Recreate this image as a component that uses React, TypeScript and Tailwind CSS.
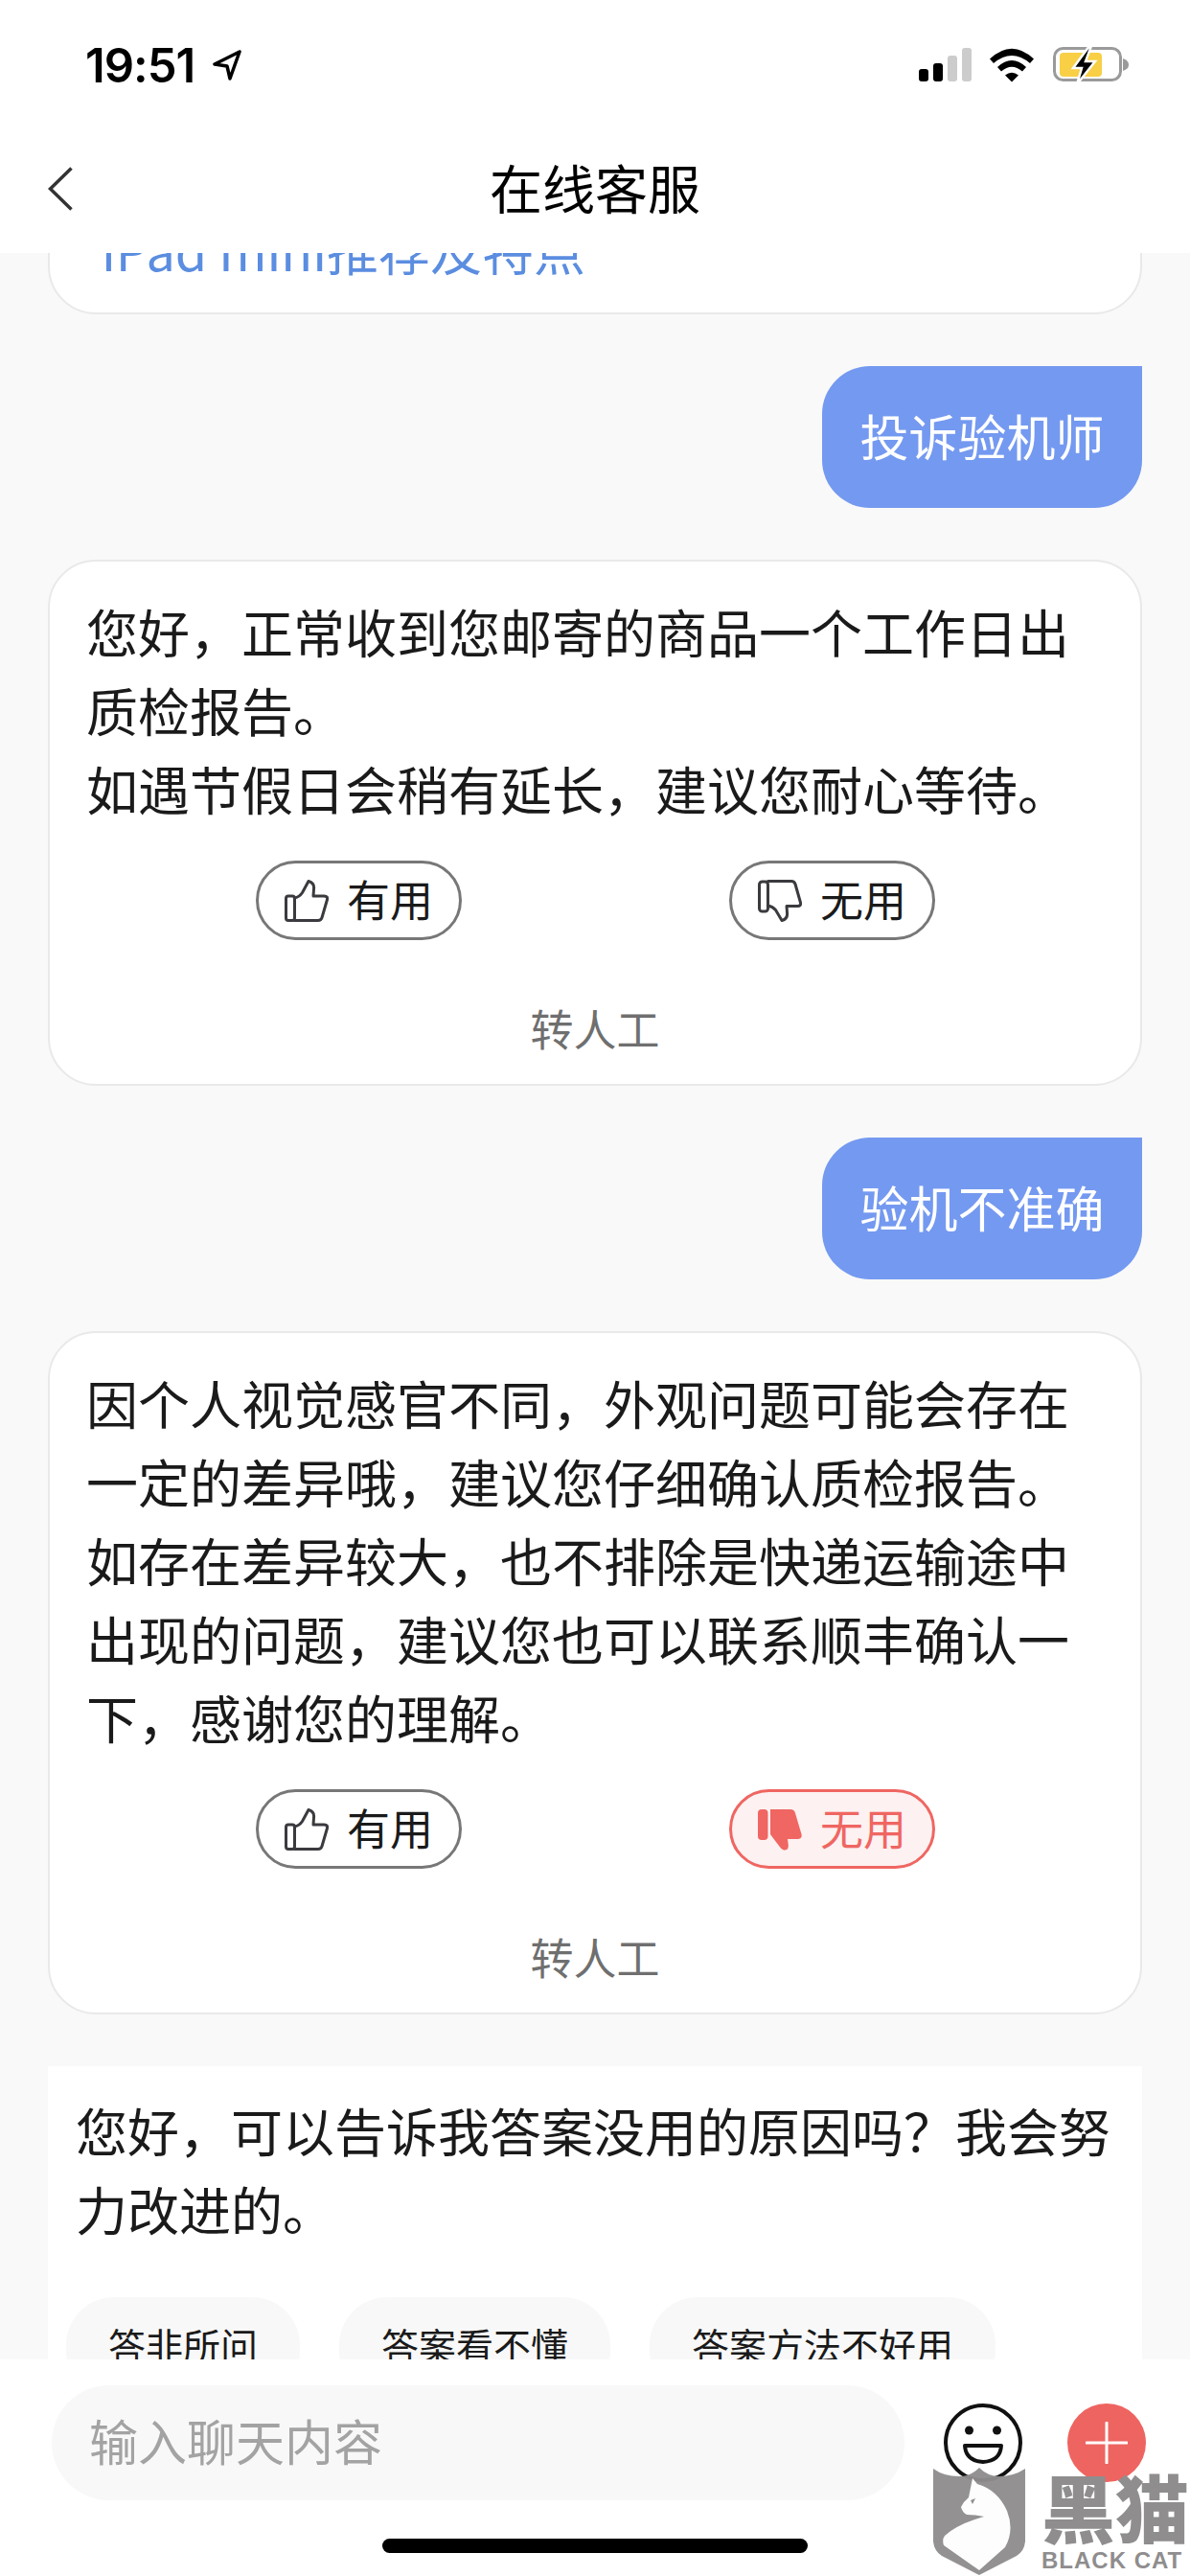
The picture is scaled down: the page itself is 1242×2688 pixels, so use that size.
import React from "react";

const FONT = "font-['Noto_Sans_CJK_SC','Noto_Sans',sans-serif]";

function ThumbUp({ className = "" }: { className?: string }) {
  return (
    <svg viewBox="0 0 46 44" className={className} fill="none" stroke="currentColor" strokeWidth="3" strokeLinejoin="round" strokeLinecap="round">
      <rect x="1.5" y="17" width="9" height="25.5" rx="2.5" />
      <path d="M10.5 42.5H35q3 0 4-3l5.4-18.5q1-4-3-4H30l.6-8.5Q30.800 3 25 1.500L18.500 13.500Q15.500 18 10.500 19" />
    </svg>
  );
}

function ThumbDown({ active = false }: { active?: boolean }) {
  if (active) {
    return (
      <svg viewBox="0 0 46 44" className="h-[44px] w-[46px] text-[#ef6662]" fill="currentColor">
        <rect x="0" y="1" width="10.500" height="32" rx="4" />
        <path d="M13 1H34q4 0 5 4L45.500 27q1 5-4 5H31l.8 6.500Q32 44 27 43.500 24.500 43 22 39L14 28.500Q13 27.500 13 26Z" />
      </svg>
    );
  }
  return (
    <svg viewBox="0 0 46 44" className="h-[44px] w-[46px] -scale-y-100 text-[#3a3a3f]" fill="none" stroke="currentColor" strokeWidth="3" strokeLinejoin="round" strokeLinecap="round">
      <rect x="1.500" y="11" width="9" height="31" rx="3" />
      <path d="M10.500 42.500H35q3 0 4-3l5.400-19q1-4-3-4H30l.6-8Q30.800 3 25 1.500L18.500 12.500Q15.500 16 10.500 17" />
    </svg>
  );
}

function Pill({ label, down, active }: { label: string; down?: boolean; active?: boolean }) {
  return (
    <div
      className={`flex h-[83px] w-[215px] items-center gap-[19px] rounded-full border-[3px] pl-[27px] text-[45px] leading-none ${
        active ? "border-[#ef6662] bg-[#fdf1f1] text-[#ef6662]" : "border-[#777777] bg-white text-[#1a1a1a]"
      }`}
    >
      {down ? <ThumbDown active={active} /> : <ThumbUp className="h-[44px] w-[46px] text-[#3a3a3f]" />}
      <span className="pb-[5px]">{label}</span>
    </div>
  );
}

function Reply({ lines, active }: { lines: string[]; active?: boolean }) {
  return (
    <section className="rounded-[50px] border-2 border-[#e9e9e9] bg-white pt-[32px]">
      <div className="px-[38px] text-[54px] leading-[82px] text-[#1a1a1a]">
        {lines.map((l) => (
          <p key={l} className="whitespace-nowrap">{l}</p>
        ))}
      </div>
      <div className="mt-[34px] flex pl-[215px]">
        <Pill label="有用" />
        <div className="ml-[279px]">
          <Pill label="无用" down active={active} />
        </div>
      </div>
      <p className="flex h-[150px] items-center justify-center pt-[34px] text-[45px] text-[#6f6f6f]">转人工</p>
    </section>
  );
}

function Bubble({ text }: { text: string }) {
  return (
    <div className="my-[54px] ml-auto flex h-[148px] w-[334px] items-center justify-center rounded-[50px] rounded-tr-none bg-[#7499f0] pb-[3px] text-[51px] text-white">
      {text}
    </div>
  );
}

function StatusIcons() {
  return (
    <svg width="222" height="38" viewBox="0 0 222 38" className="block">
      <rect x="2" y="23" width="10" height="13" rx="3" fill="#000" />
      <rect x="17" y="17" width="10" height="19" rx="3" fill="#000" />
      <rect x="32" y="9" width="10" height="27" rx="3" fill="#cccccc" />
      <rect x="47" y="1" width="10" height="35" rx="3" fill="#cccccc" />
      <path d="M76 12.500Q99 -9 122 12.500L118 17Q99 1 80 17Z" fill="#000" />
      <path d="M84 21Q99 7 114 21L110 25.500Q99 16 88 25.500Z" fill="#000" />
      <path d="M92 29.500Q99 24 106 29.500L99 36.500Z" fill="#000" />
      <rect x="143.500" y="1.500" width="69" height="33" rx="9" fill="none" stroke="#9a9a9a" strokeWidth="3" />
      <path d="M149 10q0-4 4-4h36q4 0 4 4v17q0 4-4 4h-36q-4 0-4-4Z" fill="#f8cf45" />
      <path d="M215 12q6 2 6 6.500t-6 6.500Z" fill="#9a9a9a" />
      <path d="M180 -1 163 22h9l-5 17 19-24h-10l6-16Z" fill="#000" stroke="#fff" strokeWidth="2.500" />
    </svg>
  );
}

function Smiley() {
  return (
    <svg viewBox="0 0 84 82" className="h-[82px] w-[84px]" fill="none">
      <circle cx="42" cy="41" r="39" stroke="#111" strokeWidth="4" />
      <circle cx="27.500" cy="28" r="4.500" fill="#111" />
      <circle cx="56.500" cy="28" r="4.500" fill="#111" />
      <path d="M23 44H61Q60 60 42 61 24 60 23 44Z" stroke="#111" strokeWidth="4" strokeLinejoin="round" />
    </svg>
  );
}

function Watermark() {
  return (
    <div className="pointer-events-none absolute bottom-0 right-0 z-20 flex h-[114px] w-[269px]">
      <svg viewBox="0 0 98 114" className="h-[114px] w-[98px] shrink-0">
        {/* shield */}
        <path d="M1 2Q12 10 28 10 40 10 49 1 58 10 70 10 85 10 97 2V78Q96 88 88 93L49 113 10 93Q2 88 1 78Z" fill="#8f8d8e" opacity="0.96" />
        {/* cat silhouette in the shield */}
        <path d="M42 12 47 18Q68 24 78 46 86 66 76 84L49 108 12 82Q10 76 13 72 26 60 54 52 44 50 36 50 31 47 30 42 33 36 38 32 40 22 42 12Z" fill="#fdfdfd" />
        <path d="M40 35l5-2-3 6Z" fill="#8f8d8e" />
      </svg>
      <div className="ml-[16px] flex flex-col text-[#8f8d8e]">
        <span className="mt-[3px] h-[76px] whitespace-nowrap text-[77px] font-black leading-[76px]">黑猫</span>
        <span className="mt-[8px] whitespace-nowrap font-['Liberation_Sans',sans-serif] text-[24px] font-bold leading-[22px] tracking-[1px]">BLACK CAT</span>
      </div>
    </div>
  );
}

export default function App() {
  return (
    <div className={`relative flex h-[2688px] w-[1242px] flex-col overflow-hidden bg-white ${FONT}`}>
      <header className="z-10 h-[264px] shrink-0 bg-white">
        <div className="flex h-[136px] items-center justify-between pl-[89px] pr-[63px]">
          <div className="flex items-center gap-[19px]">
            <span className="font-['Inter',sans-serif] text-[49px] font-semibold leading-none tracking-[-1px] text-black">19:51</span>
            <svg viewBox="0 0 30 32" className="h-[32px] w-[30px]" fill="none" stroke="#000" strokeWidth="3.500" strokeLinejoin="round">
              <path d="M28 2 2 15l13 2 3 13Z" />
            </svg>
          </div>
          <StatusIcons />
        </div>
        <div className="relative flex h-[122px] items-center justify-center">
          <svg viewBox="0 0 26 46" className="absolute left-[50px] h-[46px] w-[26px]" fill="none" stroke="#333" strokeWidth="3.500">
            <path d="M24.500 1.500 2.500 23l22 21.500" />
          </svg>
          <h1 className="pb-[5px] text-[55px] font-normal text-black">在线客服</h1>
        </div>
      </header>

      <main className="min-h-0 flex-1 overflow-hidden bg-[#f9f9f9] px-[50px]">
        <section className="-mt-[100px] rounded-[50px] border-2 border-[#e9e9e9] bg-white pb-[25px] pl-[54px] pt-[53px] text-[54px] leading-[82px] text-[#5b8de0]">
          iPad mini推荐及特点
        </section>
        <Bubble text="投诉验机师" />
        <Reply
          lines={["您好，正常收到您邮寄的商品一个工作日出", "质检报告。", "如遇节假日会稍有延长，建议您耐心等待。"]}
        />
        <Bubble text="验机不准确" />
        <Reply
          active
          lines={[
            "因个人视觉感官不同，外观问题可能会存在",
            "一定的差异哦，建议您仔细确认质检报告。",
            "如存在差异较大，也不排除是快递运输途中",
            "出现的问题，建议您也可以联系顺丰确认一",
            "下，感谢您的理解。",
          ]}
        />
        <section className="mt-[54px] bg-white px-[19px] pt-[26px]">
          <div className="px-[10px] text-[54px] leading-[82px] text-[#1a1a1a]">
            <p className="whitespace-nowrap">您好，可以告诉我答案没用的原因吗？我会努</p>
            <p>力改进的。</p>
          </div>
          <div className="mt-[51px] flex gap-[41px] text-[39px] text-[#1a1a1a]">
            {["答非所问", "答案看不懂", "答案方法不好用"].map((c) => (
              <span key={c} className="flex h-[106px] items-center whitespace-nowrap rounded-[50px] bg-[#f8f8f8] px-[44px] pb-[8px]">
                {c}
              </span>
            ))}
          </div>
        </section>
      </main>

      <footer className="z-10 h-[226px] shrink-0 bg-white pt-[27px]">
        <div className="flex items-start pl-[54px]">
          <div className="flex h-[120px] w-[890px] items-center rounded-[60px] bg-[#f8f8f8] pb-[5px] pl-[39px] text-[51px] text-[#a3a3a3]">
            输入聊天内容
          </div>
          <div className="ml-[40px] mt-[19px]">
            <Smiley />
          </div>
          <div className="ml-[46px] mt-[19px] flex h-[82px] w-[82px] items-center justify-center rounded-full bg-[#ee6460]">
            <svg viewBox="0 0 44 44" className="h-[44px] w-[44px]" stroke="#fff" strokeWidth="3" strokeLinecap="round">
              <path d="M22 1v42M1 22h42" />
            </svg>
          </div>
        </div>
        <div className="mx-auto mt-[40px] h-[15px] w-[444px] rounded-full bg-black" />
      </footer>

      <Watermark />
    </div>
  );
}
